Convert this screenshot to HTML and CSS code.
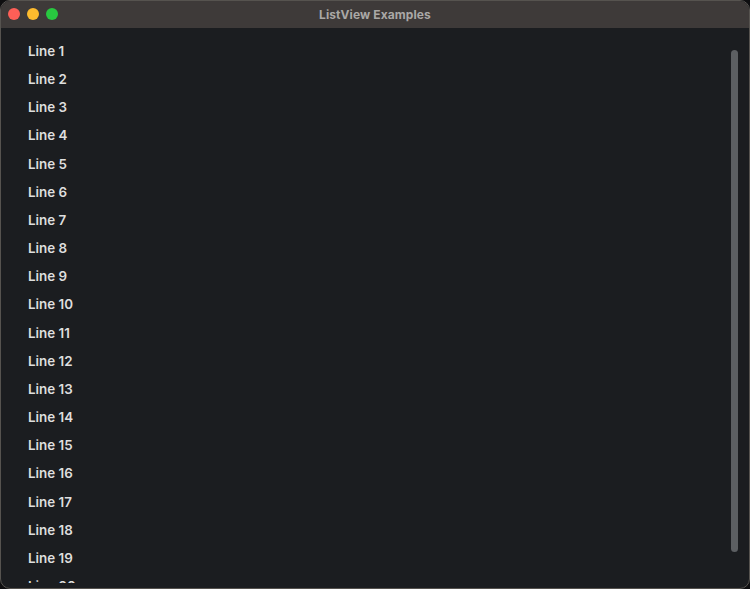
FILE: index.html
```html
<!DOCTYPE html>
<html>
<head>
<meta charset="utf-8">
<title>ListView Examples</title>
<link rel="stylesheet" href="styles.css">
</head>
<body>
<div class="window">
  <div class="titlebar">
    <div class="lights">
      <span class="light red"></span>
      <span class="light yellow"></span>
      <span class="light green"></span>
    </div>
    <div class="title">ListView Examples</div>
  </div>
  <div class="content">
    <div class="viewport">
      <ul class="list">
        <li>Line 1</li>
        <li>Line 2</li>
        <li>Line 3</li>
        <li>Line 4</li>
        <li>Line 5</li>
        <li>Line 6</li>
        <li>Line 7</li>
        <li>Line 8</li>
        <li>Line 9</li>
        <li>Line 10</li>
        <li>Line 11</li>
        <li>Line 12</li>
        <li>Line 13</li>
        <li>Line 14</li>
        <li>Line 15</li>
        <li>Line 16</li>
        <li>Line 17</li>
        <li>Line 18</li>
        <li>Line 19</li>
        <li>Line 20</li>
        <li>Line 21</li>
      </ul>
    </div>
    <div class="scrollbar"></div>
  </div>
</div>
</body>
</html>
```
FILE: styles.css
```css
html, body {
  margin: 0;
  padding: 0;
  background: #0e0e10;
  width: 750px;
  height: 589px;
  overflow: hidden;
}

.window {
  box-sizing: border-box;
  width: 750px;
  height: 589px;
  border: 1px solid #56534f;
  border-radius: 10px;
  overflow: hidden;
  display: flex;
  flex-direction: column;
  background: #1b1d20;
  font-family: Inter, "Noto Sans", sans-serif;
}

.titlebar {
  position: relative;
  height: 27px;
  flex: 0 0 27px;
  background: #3e3a39;
  display: flex;
  align-items: center;
  justify-content: center;
}

.lights {
  position: absolute;
  left: 7px;
  top: 7px;
  display: flex;
  gap: 7px;
}

.light {
  width: 12px;
  height: 12px;
  border-radius: 50%;
}

.red { background: #fe5f57; }
.yellow { background: #febc2e; }
.green { background: #28c840; }

.title {
  color: #aaa8a6;
  font-size: 12px;
  font-weight: 700;
  letter-spacing: 0.1px;
}

.content {
  position: relative;
  flex: 1 1 0;
  min-height: 0;
  display: flex;
  flex-direction: column;
  padding-bottom: 5px;
}

.viewport {
  flex: 1 1 0;
  min-height: 0;
  overflow: hidden;
}

.list {
  list-style: none;
  margin: 0;
  padding: 9px 0 0 27px;
}

.list li {
  height: 28.17px;
  line-height: 28px;
  color: #dedede;
  font-size: 13.4px;
  font-weight: 600;
}

.scrollbar {
  position: absolute;
  right: 11px;
  top: 22px;
  width: 7px;
  height: 502px;
  border-radius: 4px;
  background: #5c5f62;
}
```
